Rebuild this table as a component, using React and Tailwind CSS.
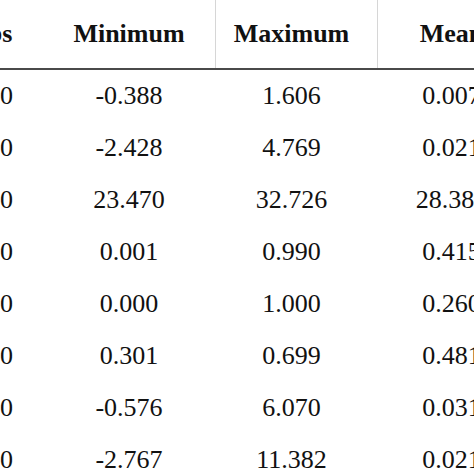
import React from "react";

const rows = [
    { obs: "1000", min: "-0.388", max: "1.606", mean: "0.007" },
    { obs: "1000", min: "-2.428", max: "4.769", mean: "0.021" },
    { obs: "1000", min: "23.470", max: "32.726", mean: "28.383" },
    { obs: "1000", min: "0.001", max: "0.990", mean: "0.415" },
    { obs: "1000", min: "0.000", max: "1.000", mean: "0.260" },
    { obs: "1000", min: "0.301", max: "0.699", mean: "0.481" },
    { obs: "1000", min: "-0.576", max: "6.070", mean: "0.031" },
    { obs: "1000", min: "-2.767", max: "11.382", mean: "0.021" },
];

const App = () => {
    return (
        <div
            className="w-[474px] h-[474px] overflow-hidden bg-white text-[#111]"
            style={{ fontFamily: '"Liberation Serif", "Times New Roman", serif' }}
        >
            <div className="ml-[-63px] w-[640px]">
                {/* header */}
                <div className="flex h-[70px] border-b-2 border-[#4a4a4a] text-[26px] font-bold leading-[68px]">
                    <div className="w-[116px] pr-[10px] text-center">Obs</div>
                    <div className="w-[162px] pr-[10px] text-center">Minimum</div>
                    <div className="w-[162px] pr-[10px] text-center border-l border-[#d6d6d6]">Maximum</div>
                    <div className="w-[162px] pr-[14px] text-center border-l border-[#d6d6d6]">Mean</div>
                </div>
                {rows.map((r, idx) => (
                    <div key={idx} className="flex h-[52px] text-[26px] leading-[52px]">
                        <div className="w-[116px] pr-[16px] text-center">{r.obs}</div>
                        <div className="w-[162px] pr-[10px] text-center">{r.min}</div>
                        <div className="w-[162px] pr-[10px] text-center pl-px">{r.max}</div>
                        <div className="w-[162px] pr-[14px] text-center pl-px">{r.mean}</div>
                    </div>
                ))}
            </div>
        </div>
    );
};

export default App;
